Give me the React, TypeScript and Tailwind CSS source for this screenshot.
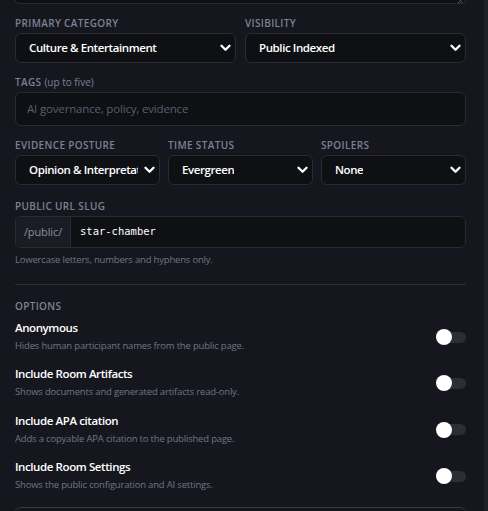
const sans = { fontFamily: '"Open Sans", "Noto Sans", sans-serif' };

function Label({ children }: { children: React.ReactNode }) {
  return (
    <div className="mb-[3px] h-[14px] text-[10px] leading-[14px] font-semibold tracking-[0.035em] text-[#7c8194] uppercase">
      {children}
    </div>
  );
}

function Chevron() {
  return (
    <svg width="11" height="8" viewBox="0 0 11 8" className="shrink-0">
      <polyline points="1.5,1.8 5.5,5.8 9.5,1.8" fill="none" stroke="white" strokeWidth="2.3" strokeLinecap="round" strokeLinejoin="round" />
    </svg>
  );
}

function Select({ value }: { value: string }) {
  return (
    <div className="flex h-[30px] items-center justify-between gap-[6px] rounded-md border border-[#2a2b33] bg-[#0f1014] pr-[4px] pl-[13px]">
      <span className="overflow-hidden text-[11.5px] font-semibold tracking-[-0.035em] whitespace-nowrap text-white">{value}</span>
      <Chevron />
    </div>
  );
}

function Toggle() {
  return (
    <div className="relative h-[16px] w-[30px] shrink-0">
      <div className="absolute top-[2.5px] right-0 h-[11px] w-[26px] rounded-full bg-[#2c2d36]" />
      <div className="absolute top-0 left-0 h-[16px] w-[16px] rounded-full bg-white" />
    </div>
  );
}

const options = [
  { title: 'Anonymous', desc: 'Hides human participant names from the public page.' },
  { title: 'Include Room Artifacts', desc: 'Shows documents and generated artifacts read-only.' },
  { title: 'Include APA citation', desc: 'Adds a copyable APA citation to the published page.' },
  { title: 'Include Room Settings', desc: 'Shows the public configuration and AI settings.' },
];

export default function App() {
  return (
    <div className="flex h-[511px] w-[488px] overflow-hidden bg-[#16171e]" style={sans}>
      <div className="w-[484px] pr-[18px] pl-[15px]">
        {/* tail of the description textarea above */}
        <div className="relative h-[4px] rounded-b-md border-x border-b border-[#2a2b33] bg-[#0f1014]">
          <svg width="6" height="4" viewBox="0 0 6 4" className="absolute right-[2px] bottom-0">
            <path d="M1 4 L5 0 M3.5 4 L5.5 2" stroke="#6b6f80" strokeWidth="0.8" />
          </svg>
        </div>

        <div className="mt-[12px] grid grid-cols-2 gap-[9px]">
          <div>
            <Label>Primary Category</Label>
            <Select value="Culture & Entertainment" />
          </div>
          <div>
            <Label>Visibility</Label>
            <Select value="Public Indexed" />
          </div>
        </div>

        <div className="mt-[12px]">
          <Label>
            Tags <span className="font-normal tracking-normal normal-case">(up to five)</span>
          </Label>
          <div className="flex h-[34px] items-center rounded-md border border-[#2a2b33] bg-[#0f1014] px-[11px] text-[11.5px] tracking-[-0.015em] text-[#5a5e6c]">
            AI governance, policy, evidence
          </div>
        </div>

        <div className="mt-[12px] grid grid-cols-3 gap-[8px]">
          <div>
            <Label>Evidence Posture</Label>
            <Select value="Opinion & Interpretation" />
          </div>
          <div>
            <Label>Time Status</Label>
            <Select value="Evergreen" />
          </div>
          <div>
            <Label>Spoilers</Label>
            <Select value="None" />
          </div>
        </div>

        <div className="mt-[14px]">
          <Label>Public URL Slug</Label>
          <div className="flex h-[32px] overflow-hidden rounded-md border border-[#2a2b33] bg-[#0f1014]">
            <div className="flex w-[55px] items-center justify-center border-r border-[#2a2b33] bg-[#1b1c23] text-[11px] tracking-[-0.01em] text-[#8a8fa0]">
              /public/
            </div>
            <div
              className="flex items-center pl-[9px] text-[10.5px] text-white"
              style={{ fontFamily: '"DejaVu Sans Mono", "Liberation Mono", monospace' }}
            >
              star-chamber
            </div>
          </div>
          <div className="mt-[5px] text-[9.5px] leading-[14px] tracking-[-0.02em] text-[#6f7487]">
            Lowercase letters, numbers and hyphens only.
          </div>
        </div>

        <div className="mt-[17px] border-t border-[#2e2f36]" />

        <div className="mt-[14px]">
          <Label>Options</Label>
          <div className="mt-[6px] flex flex-col gap-[10.4px]">
            {options.map((o) => (
              <div key={o.title} className="flex items-center justify-between">
                <div>
                  <div className="text-[11.5px] leading-[18px] font-semibold tracking-[-0.035em] text-white">{o.title}</div>
                  <div className="text-[9.5px] leading-[18px] tracking-[-0.02em] text-[#6f7487]">{o.desc}</div>
                </div>
                <Toggle />
              </div>
            ))}
          </div>
        </div>

        <div className="mt-[13px] h-[6px] rounded-t-md border-t border-[#3a3b42]" />
      </div>
      <div className="w-[4px] bg-[#1f2028]" />
    </div>
  );
}
